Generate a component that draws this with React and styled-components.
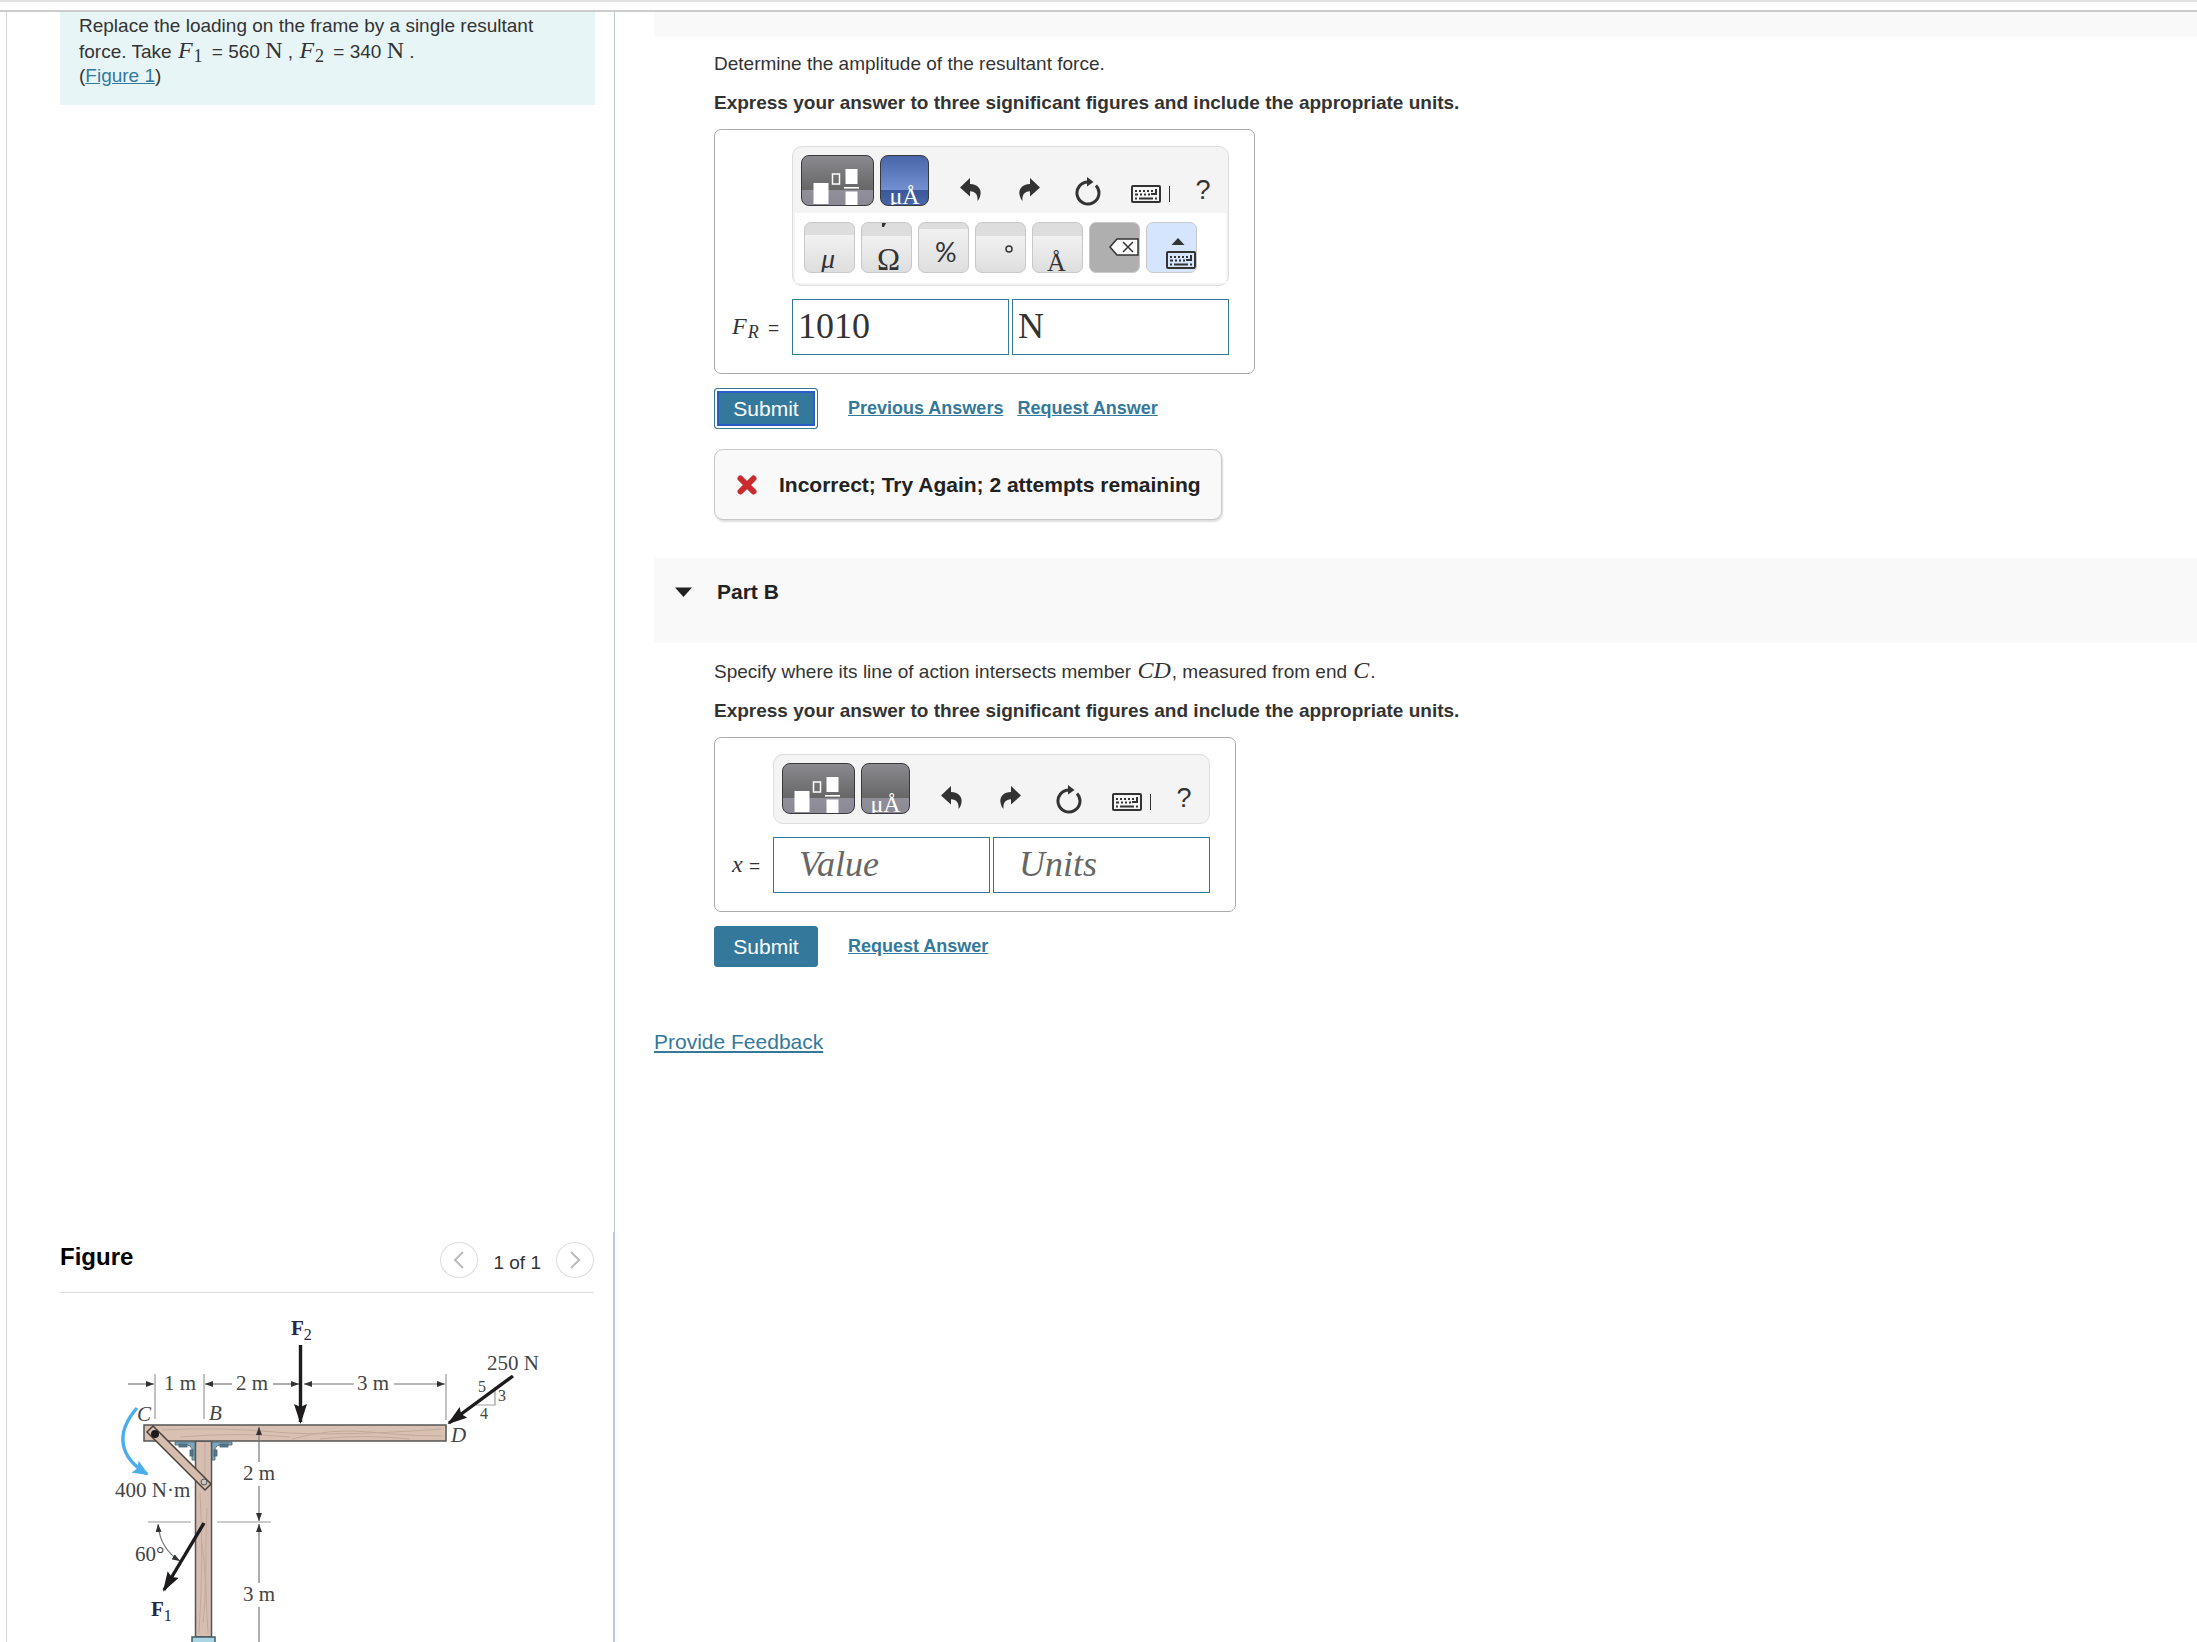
import React from "react";
import styled, { createGlobalStyle, css } from "styled-components";

const GlobalStyle = createGlobalStyle`
  :root {
    --link: #34799b;
    --text: #333;
    --band: #f9f9f9;
    --sans: "Liberation Sans", Arial, sans-serif;
    --serif: "Liberation Serif", "Times New Roman", serif;
  }

  * {
    box-sizing: border-box;
  }

  body {
    margin: 0;
    background: #fff;
    color: var(--text);
    font-family: var(--sans);
    font-size: 19px;
    line-height: 24px;
  }

  p, h2, h3 {
    margin: 0;
  }

  a {
    color: var(--link);
  }
`;

const Page = styled.div`
  height: 100vh;
  display: flex;
  flex-direction: column;
  overflow: hidden;
`;

const TopBar = styled.header`
  flex: none;
  height: 12px;
  border-top: 2px solid #e1e1e1;
  border-bottom: 2px solid #ccc;
`;

const Columns = styled.div`
  flex: 1;
  min-height: 0;
  display: grid;
  grid-template-columns: 608px minmax(0, 1fr);
  margin-left: 6px;
  border-left: 1px solid #d5d5d5;
`;

const Sidebar = styled.aside`
  display: flex;
  flex-direction: column;
  min-height: 0;
`;

const QuestionPane = styled.section`
  flex: 1;
  padding: 0 19px 0 53px;
  border-right: 1px solid #bcc8d6;
`;

const Question = styled.div`
  padding: 2px 19px 17px;
  background: #e8f5f7;
`;

const FigurePane = styled.section`
  flex: none;
  height: 25vh;
  padding: 0 19px 0 53px;
  border-right: 2px solid #b8c8e0;
  overflow: hidden;
`;

const FigureHeader = styled.div`
  height: 61px;
  display: flex;
  align-items: center;
  justify-content: space-between;
  padding-bottom: 4px;
  border-bottom: 1px solid #ddd;
`;

const FigureTitle = styled.h2`
  padding-bottom: 6px;
  font-size: 24px;
  line-height: 28px;
  color: #000;
`;

const Pager = styled.div`
  display: flex;
  align-items: center;
  gap: 15px;
`;

const PagerText = styled.span`
  padding-top: 6px;
`;

const PagerButton = styled.button`
  width: 38px;
  height: 36px;
  display: flex;
  align-items: center;
  justify-content: center;
  padding: 0;
  border: 1px solid #ddd;
  border-radius: 50%;
  background: #fff;
`;

const Drawing = styled.svg`
  display: block;
  width: 100%;
  font-family: var(--serif);
  font-size: 21px;
`;

const Main = styled.main`
  padding-left: 39px;
`;

const Band = styled.div`
  height: 25px;
  background: var(--band);
`;

const PartHeader = styled.div`
  height: 85px;
  display: flex;
  align-items: flex-start;
  gap: 25px;
  margin-top: 38px;
  padding: 22px 21px 0;
  background: var(--band);
  color: #222;

  svg {
    margin-top: 7px;
  }
`;

const PartTitle = styled.h3`
  font-size: 21px;
  line-height: 24px;
`;

const Part = styled.form`
  display: flex;
  flex-direction: column;
  align-items: flex-start;
  padding: 15px 60px 0;
`;

const Instruction = styled.p`
  margin: 15px 0 14px;
  font-weight: bold;
`;

const Var = styled.i`
  margin: 0 1px;
  font-family: var(--serif);
  font-size: 24px;
  line-height: 1;
`;

const Unit = styled.span`
  font-family: var(--serif);
  font-size: 24px;
  line-height: 1;
`;

const Sub = styled.sub`
  margin-right: 4px;
  font-family: var(--serif);
  font-style: ${props => props.$italic ? "italic" : "normal"};
  font-size: 18px;
  line-height: 0;
  vertical-align: -4px;
`;

const AnswerBox = styled.div`
  display: grid;
  grid-template-columns: auto 437px;
  row-gap: 13px;
  padding: 16px 25px 18px 16px;
  border: 1px solid #aaa;
  border-radius: 7px;
`;

const AnswerLabel = styled.label`
  grid-column: 1;
  align-self: center;
  padding-right: 13px;
`;

const Fields = styled.div`
  grid-column: 2;
  display: grid;
  grid-template-columns: 1fr 1fr;
  gap: 3px;
`;

const Field = styled.input`
  width: 100%;
  height: 56px;
  padding: 0 5px 2px;
  border: 1px solid var(--link);
  border-radius: 0;
  color: var(--text);
  font-family: var(--serif);
  font-size: 36px;

  &::placeholder {
    color: #666;
    font-style: italic;
    opacity: 1;
    text-indent: 20px;
  }
`;

const Toolbar = styled.div`
  grid-column: 2;
  padding: 0 2px 2px;
  border: 1px solid #ddd;
  border-radius: 10px;
  background: #f4f4f4;
`;

const ToolRow = styled.div`
  display: flex;
  padding: 8px 6px 7px;
`;

const KeyRow = styled.div`
  display: flex;
  gap: 6px;
  padding: 9px 9px 10px;
  background: #fff;
`;

const ModeButton = styled.button`
  flex: none;
  width: ${props => props.$wide ? 73 : 49}px;
  height: 51px;
  display: flex;
  align-items: flex-end;
  justify-content: center;
  margin-right: 6px;
  padding: 0;
  border: 1px solid #3a3a3e;
  border-radius: 8px;
  overflow: hidden;
  color: #fff;
  font-family: var(--serif);
  font-size: 24px;
  line-height: 18px;
  background: linear-gradient(#8a8a8f, #666 70%, #918f9a 70%, #8a8893);

  ${props => props.$active && css`
    background: linear-gradient(#4866a8, #7390d2 70%, #3a5899 70%, #4866a8);
  `}
`;

const IconButton = styled.button`
  flex: none;
  width: 58px;
  height: 51px;
  display: flex;
  align-items: flex-end;
  justify-content: center;
  padding: 0;
  border: 0;
  background: none;
  color: var(--text);
  font-family: var(--sans);
  font-size: 27px;
  line-height: 32px;
`;

const IconGroup = styled.div`
  display: flex;
  margin-left: 7px;
`;

const bands = { low: 12, mid: 13, high: 6 };

const Key = styled.button`
  flex: none;
  width: 51px;
  height: 51px;
  display: flex;
  align-items: flex-end;
  justify-content: center;
  padding: 0;
  border: 1px solid #c8c8c8;
  border-radius: 7px;
  overflow: hidden;
  background: ${props => props.$fill || `linear-gradient(#ddd ${bands[props.$band]}px, #f1f1f1 ${bands[props.$band]}px, #dedede)`};
`;

const Actions = styled.div`
  display: flex;
  align-items: center;
  margin-top: 14px;
  font-size: 18px;
  font-weight: bold;
`;

const Submit = styled.button`
  width: 104px;
  height: 41px;
  margin-right: 30px;
  padding: 0;
  border: 1px solid var(--link);
  border-radius: 3px;
  background: var(--link);
  color: #fff;
  font-family: var(--sans);
  font-size: 21px;

  ${props => props.$focused && css`
    box-shadow: inset 0 0 0 2px #fff, inset 0 0 0 4px #2a5ccb;
  `}
`;

const ActionLink = styled.a`
  margin-right: 14px;
  padding-bottom: 2px;
`;

const Feedback = styled.div`
  display: flex;
  align-items: center;
  gap: 22px;
  margin-top: 20px;
  height: 71px;
  padding: 0 20px 0 22px;
  border: 1px solid #c8c8c8;
  border-radius: 9px;
  background: var(--band);
  box-shadow: 1px 2px 2px #ddd;
  color: #222;
  font-size: 21px;
  font-weight: bold;
`;

const FooterLink = styled.a`
  display: inline-block;
  margin-top: 63px;
  font-size: 21px;
  text-decoration-thickness: 2px;
  text-underline-offset: 2px;
`;

const TemplateIcon = () => (
  <svg width="71" height="49" viewBox="1 1 71 49" fill="#fff">
    <rect x="12.5" y="28" width="15" height="21" />
    <rect x="31.5" y="19" width="7" height="10" fill="none" stroke="#fff" strokeWidth="1.5" />
    <rect x="44.5" y="14" width="12" height="15" />
    <rect x="43" y="32" width="15" height="1.6" />
    <rect x="44.5" y="36.5" width="12" height="14" />
  </svg>
);

const UndoIcon = ({ flip }) => (
  <svg width="58" height="30" viewBox="0 0 58 30" fill="#333">
    <path
      transform={flip ? "translate(58 0) scale(-1 1)" : undefined}
      d="M18 11.5 L28 2 V8 C36 8 39.5 13.5 38.5 18.5 C38 21.5 37 23.5 35.5 25 C36 19 34 15.5 28 15.2 V20.5 Z"
    />
  </svg>
);

const ResetIcon = () => (
  <svg width="58" height="30" viewBox="0 0 58 30">
    <path d="M38 9.5 A11 11 0 1 1 30 6" fill="none" stroke="#333" strokeWidth="3" />
    <path d="M29 1 L35.5 6 L29 10.5 Z" fill="#333" />
  </svg>
);

const KeyboardShape = ({ x, y }) => (
  <g transform={`translate(${x} ${y})`} fill="#333">
    <rect x="1" y="1" width="28" height="16" rx="1" fill="none" stroke="#333" strokeWidth="2" />
    <path d="M4 5h2v2h-2z M8 5h2v2h-2z M12 5h2v2h-2z M16 5h2v2h-2z M20 5h2v2h-2z M24 4h2v6h-6v-2h4z" />
    <path d="M4 8.5h3v2h-3z M9 8.5h2v2h-2z M13 8.5h2v2h-2z M17 8.5h2v2h-2z" />
    <path d="M4 12.5h2v2h-2z M8 12.5h14v2h-14z M24 12.5h2v2h-2z" />
  </g>
);

const KeyboardIcon = () => (
  <svg width="58" height="30" viewBox="0 0 58 30">
    <KeyboardShape x="15" y="9" />
    <path d="M53.5 10V26" stroke="#333" />
  </svg>
);

// face of a symbol key, drawn in its 49px inner square
const KeyFace = styled.svg`
  display: block;
  flex: none;
  width: 49px;
  height: 49px;
  fill: #333;
  font-family: var(--serif);
`;

const PercentText = styled.text`
  font-family: Lato, sans-serif;
  font-size: 27px;
`;

const Tools = ({ unitsOpen }) => (
  <Toolbar>
    <ToolRow>
      <ModeButton type="button" $wide aria-label="Templates"><TemplateIcon /></ModeButton>
      <ModeButton type="button" $active={unitsOpen}>μÅ</ModeButton>
      <IconGroup>
        <IconButton type="button" aria-label="Undo"><UndoIcon /></IconButton>
        <IconButton type="button" aria-label="Redo"><UndoIcon flip /></IconButton>
        <IconButton type="button" aria-label="Reset"><ResetIcon /></IconButton>
        <IconButton type="button" aria-label="Keyboard shortcuts"><KeyboardIcon /></IconButton>
        <IconButton type="button">?</IconButton>
      </IconGroup>
    </ToolRow>
    {unitsOpen && (
      <KeyRow>
        <Key type="button" $band="low">
          <KeyFace><text x="16" y="45" fontSize="28" fontStyle="italic">μ</text></KeyFace>
        </Key>
        <Key type="button" $band="mid">
          <KeyFace>
            <path d="M20 0 h4 l-2 4 h-2 z" />
            <text x="15" y="47" fontSize="31">Ω</text>
          </KeyFace>
        </Key>
        <Key type="button" $band="high">
          <KeyFace><PercentText x="16" y="39">%</PercentText></KeyFace>
        </Key>
        <Key type="button" $band="mid" aria-label="Degree">
          <KeyFace><circle cx="33" cy="26" r="3" fill="none" stroke="#333" strokeWidth="1.5" /></KeyFace>
        </Key>
        <Key type="button" $band="mid">
          <KeyFace><text x="14" y="48" fontSize="26">Å</text></KeyFace>
        </Key>
        <Key type="button" $fill="#afafaf" aria-label="Backspace">
          <KeyFace>
            <path d="M20 24 L27 16 H48 V32 H27 Z" fill="#fff" stroke="#333" strokeWidth="1.5" />
            <path d="M33 19 L43 29 M43 19 L33 29" stroke="#333" strokeWidth="1.5" />
          </KeyFace>
        </Key>
        <Key type="button" $fill="#d4e5fd" aria-label="Hide keyboard">
          <KeyFace>
            <path d="M24.5 22 L31 15 L37.5 22 Z" />
            <KeyboardShape x="19" y="28" />
          </KeyFace>
        </Key>
      </KeyRow>
    )}
  </Toolbar>
);

const Bracket = ({ flip }) => (
  <g transform={flip ? "translate(287 0) scale(-1 1)" : undefined} stroke="#45606f" strokeWidth="0.8">
    <path d="M115 149 H135 V167 H132 V156 Q131 152 127 152 H115 Z" fill="#7fa6ba" />
    <rect x="119" y="151" width="8" height="3" fill="#55798c" />
    <rect x="130" y="157" width="3" height="6" fill="#55798c" />
  </g>
);

const FrameFigure = () => (
  <Drawing viewBox="0 0 534 360" role="img" aria-label="Loaded frame">
    <defs>
      <marker id="dim" viewBox="0 0 8 6" refX="8" refY="3" markerWidth="8" markerHeight="6" markerUnits="userSpaceOnUse" orient="auto-start-reverse">
        <path d="M0 0 L8 3 L0 6 Z" fill="#333" />
      </marker>
      <marker id="force" viewBox="0 0 20 13" refX="18" refY="6.5" markerWidth="20" markerHeight="13" markerUnits="userSpaceOnUse" orient="auto">
        <path d="M0 0 L20 6.5 L0 13 L3 6.5 Z" fill="#1d1b1c" />
      </marker>
      <marker id="moment" viewBox="0 0 16 14" refX="14" refY="7" markerWidth="16" markerHeight="14" markerUnits="userSpaceOnUse" orient="auto">
        <path d="M0 0 L16 7 L0 14 L3 7 Z" fill="#4aaeec" />
      </marker>
    </defs>

    <rect x="135.5" y="148" width="16" height="196" fill="#d5beb0" stroke="#555" strokeWidth="1.5" />
    <path d="M140 200 Q144 260 139 340 M145 149 V185 M147 215 Q144 290 148 340 M142 250 Q148 290 143 330" fill="none" stroke="#c4a99a" />
    <rect x="132" y="344" width="23" height="16" fill="#a9d5e5" stroke="#445a66" strokeWidth="1.5" />

    <rect x="84" y="132" width="302" height="16" fill="#d8c1b3" stroke="#555" strokeWidth="1.5" />
    <path d="M102 137 Q160 134 215 139 T382 136 M120 144 Q180 139 230 144 M232 146 Q270 135 310 139 T382 143 M260 146 Q300 141 350 146" fill="none" stroke="#c4a99a" />
    <Bracket />
    <Bracket flip />

    <path d="M93 133 L151 191 L145 197 L87 139 Z" fill="#d5beb0" stroke="#4c403a" strokeWidth="1.5" />
    <circle cx="95" cy="141" r="4" fill="#1d1b1c" />
    <circle cx="144" cy="189" r="3" fill="#c9c9c9" stroke="#555" />

    <g fill="none" stroke="#999" strokeWidth="1.2">
      <path d="M95 81V126 M144 81V126 M386 81V127" />
      <path d="M88 229H131 M157 229H211" />
      <path d="M435 94V112H416" />
      <g stroke="#777">
        <path d="M68 91H94" markerEnd="url(#dim)" />
        <path d="M172 91H145" markerEnd="url(#dim)" />
        <path d="M213 91H239" markerEnd="url(#dim)" />
        <path d="M294 91H244" markerEnd="url(#dim)" />
        <path d="M334 91H385" markerEnd="url(#dim)" />
        <path d="M199 169V134" markerEnd="url(#dim)" />
        <path d="M199 193V228" markerEnd="url(#dim)" />
        <path d="M199 290V231" markerEnd="url(#dim)" />
        <path d="M199 314V360" />
        <path d="M98 231 Q100 256 120 268" markerStart="url(#dim)" markerEnd="url(#dim)" />
      </g>
    </g>

    <g fill="none" stroke="#1d1b1c" strokeWidth="3.4">
      <path d="M240.5 52V129" markerEnd="url(#force)" />
      <path d="M453 83L389 130" markerEnd="url(#force)" />
      <path d="M144 230L104 297" markerEnd="url(#force)" />
    </g>
    <path d="M77 115 C55 140 59 164 87 181" fill="none" stroke="#4aaeec" strokeWidth="3.4" markerEnd="url(#moment)" />

    <g fill="#444">
      <text x="104" y="97">1 m</text>
      <text x="176" y="97">2 m</text>
      <text x="297" y="97">3 m</text>
      <text x="183" y="187">2 m</text>
      <text x="183" y="308">3 m</text>
      <text x="427" y="77">250 N</text>
      <text x="55" y="204">400 N·m</text>
      <text x="75" y="268">60°</text>
      <g fontStyle="italic">
        <text x="77" y="128">C</text>
        <text x="149" y="127">B</text>
        <text x="391" y="149">D</text>
      </g>
      <g fontSize="16">
        <text x="418" y="99">5</text>
        <text x="438" y="108">3</text>
        <text x="420" y="126">4</text>
      </g>
    </g>
    <g fill="#26264a">
      <text x="231" y="42" fontWeight="bold">F<tspan dy="5" fontSize="16" fontWeight="normal">2</tspan></text>
      <text x="91" y="323" fontWeight="bold">F<tspan dy="5" fontSize="16" fontWeight="normal">1</tspan></text>
    </g>
  </Drawing>
);

const Chevron = ({ d }) => (
  <svg width="12" height="18" viewBox="0 0 12 18" fill="none" stroke="#bbb" strokeWidth="2">
    <path d={d} />
  </svg>
);

const App = () => (
  <>
    <GlobalStyle />
    <Page>
      <TopBar />
      <Columns>
        <Sidebar>
          <QuestionPane>
            <Question>
              <p>
                Replace the loading on the frame by a single resultant force. Take{" "}
                <Var>F</Var><Sub>1</Sub> = 560 <Unit>N</Unit> , <Var>F</Var><Sub>2</Sub> = 340 <Unit>N</Unit> .
              </p>
              <p>(<a href="#figure">Figure 1</a>)</p>
            </Question>
          </QuestionPane>
          <FigurePane id="figure">
            <FigureHeader>
              <FigureTitle>Figure</FigureTitle>
              <Pager>
                <PagerButton type="button" aria-label="Previous figure"><Chevron d="M10 1 L2 9 L10 17" /></PagerButton>
                <PagerText>1 of 1</PagerText>
                <PagerButton type="button" aria-label="Next figure"><Chevron d="M2 1 L10 9 L2 17" /></PagerButton>
              </Pager>
            </FigureHeader>
            <FrameFigure />
          </FigurePane>
        </Sidebar>

        <Main>
          <Band />
          <Part>
            <p>Determine the amplitude of the resultant force.</p>
            <Instruction>Express your answer to three significant figures and include the appropriate units.</Instruction>
            <AnswerBox>
              <Tools unitsOpen />
              <AnswerLabel htmlFor="force-value"><Var>F</Var><Sub $italic>R</Sub> =</AnswerLabel>
              <Fields>
                <Field id="force-value" defaultValue="1010" />
                <Field aria-label="Force units" defaultValue="N" />
              </Fields>
            </AnswerBox>
            <Actions>
              <Submit type="button" $focused>Submit</Submit>
              <ActionLink href="#previous">Previous Answers</ActionLink>
              <ActionLink href="#request">Request Answer</ActionLink>
            </Actions>
            <Feedback>
              <svg width="20" height="20" viewBox="0 0 20 20" stroke="#cb2a2e" strokeWidth="6" strokeLinecap="round">
                <path d="M3.5 3.5 L16.5 16.5 M16.5 3.5 L3.5 16.5" />
              </svg>
              Incorrect; Try Again; 2 attempts remaining
            </Feedback>
          </Part>

          <PartHeader>
            <svg width="17" height="10" viewBox="0 0 17 10" fill="#222"><path d="M0 0.5H17L8.5 10Z" /></svg>
            <PartTitle>Part B</PartTitle>
          </PartHeader>
          <Part>
            <p>
              Specify where its line of action intersects member <Var>CD</Var>, measured from end <Var>C</Var>.
            </p>
            <Instruction>Express your answer to three significant figures and include the appropriate units.</Instruction>
            <AnswerBox>
              <Tools />
              <AnswerLabel htmlFor="distance-value"><Var>x</Var> =</AnswerLabel>
              <Fields>
                <Field id="distance-value" placeholder="Value" />
                <Field aria-label="Distance units" placeholder="Units" />
              </Fields>
            </AnswerBox>
            <Actions>
              <Submit type="button">Submit</Submit>
              <ActionLink href="#request-b">Request Answer</ActionLink>
            </Actions>
          </Part>
          <FooterLink href="#feedback">Provide Feedback</FooterLink>
        </Main>
      </Columns>
    </Page>
  </>
);

export default App;
